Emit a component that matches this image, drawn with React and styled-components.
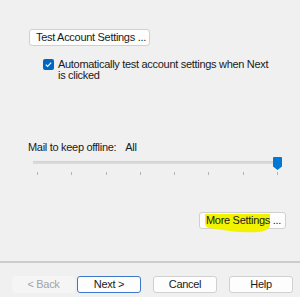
import React from "react";
import styled, { createGlobalStyle } from "styled-components";

const Global = createGlobalStyle`
  html, body { margin: 0; padding: 0; background: #f0f0f0; }
  body { font-family: "Liberation Sans", Arial, sans-serif; color: #1a1a1a; }
`;

const Window = styled.div`
  width: 300px;
  height: 297px;
  background: #f0f0f0;
  display: flex;
  flex-direction: column;
  overflow: hidden;
  font-size: 11px;
  letter-spacing: -0.3px;
`;

const Panel = styled.div`
  height: 261px;
  box-sizing: border-box;
  padding: 29px 14px 0 28px;
  display: flex;
  flex-direction: column;
  align-items: flex-start;
`;

const Button = styled.div`
  box-sizing: border-box;
  height: ${p => p.$h || 17}px;
  width: ${p => p.$w}px;
  margin-left: ${p => p.$ml || 0}px;
  margin-top: ${p => p.$mt || 0}px;
  display: flex;
  align-items: center;
  justify-content: ${p => (p.$left ? "flex-start" : "center")};
  padding-left: ${p => (p.$left ? 6 : 0)}px;
  background: ${p => (p.$disabled ? "#f5f5f5" : "#fdfdfd")};
  border: 1px solid ${p => (p.$default ? "#3c78c8" : p.$disabled ? "#f5f5f5" : "#d0d0d0")};
  border-radius: 3px;
  color: ${p => (p.$disabled ? "#a3a3a3" : "#1a1a1a")};
  font-size: 11px;
  line-height: 1;
  white-space: nowrap;
  align-self: ${p => (p.$end ? "flex-end" : "auto")};
`;

const CheckRow = styled.div`
  margin-top: 13px;
  margin-left: 15px;
  display: flex;
  align-items: flex-start;
  gap: 4px;
`;

const Box = styled.div`
  width: 11px;
  height: 11px;
  border-radius: 2px;
  background: #0067c0;
  display: flex;
  align-items: center;
  justify-content: center;
  flex: none;
`;

const CheckText = styled.div`
  white-space: nowrap;
  line-height: 11px;
  font-size: 11px;
`;

const Label = styled.div`
  margin-top: 60px;
  line-height: 12px;
  display: flex;
  gap: 9px;
`;

const Slider = styled.div`
  position: relative;
  margin-top: 4px;
  margin-left: 5px;
  width: 247px;
  height: 13px;
`;

const Track = styled.div`
  margin-top: 4px;
  height: 3px;
  background: #dadada;
  border-top: 1px solid #d2d2d2;
  box-sizing: border-box;
`;

const Thumb = styled.svg`
  position: absolute;
  left: 240px;
  top: 0;
`;

const Ticks = styled.div`
  margin-top: 2px;
  margin-left: 9px;
  width: 241px;
  height: 3px;
  display: flex;
  justify-content: space-between;
`;

const Tick = styled.div`
  width: 1px;
  height: 3px;
  background: #b4b4b4;
`;

const Highlight = styled.span`
  position: relative;
  z-index: 0;
`;

const Marker = styled.svg`
  position: absolute;
  left: -2px;
  top: -2px;
  z-index: -1;
`;

const Separator = styled.div`
  height: 2px;
  background: #cdcdcd;
`;

const Footer = styled.div`
  display: flex;
  padding: 13px 0 0 12px;
`;

export default function App() {
  return (
    <Window>
      <Global />
      <Panel>
        <Button $w={121} $ml={1} $left>Test Account Settings ...</Button>
        <CheckRow>
          <Box>
            <svg width="9" height="9" viewBox="0 0 9 9">
              <path d="M1.8 4.6 L3.6 6.4 L7.2 2.6" fill="none" stroke="#fff" strokeWidth="1.1" />
            </svg>
          </Box>
          <CheckText>
            Automatically test account settings when Next
            <br />
            is clicked
          </CheckText>
        </CheckRow>
        <Label>
          <span>Mail to keep offline:</span>
          <span>All</span>
        </Label>
        <Slider>
          <Track />
          <Thumb width="9" height="13" viewBox="0 0 9 13">
            <path d="M1 0 H8 Q9 0 9 1 V9.5 L4.5 13 L0 9.5 V1 Q0 0 1 0 Z" fill="#0078d4" />
          </Thumb>
        </Slider>
        <Ticks>
          {Array.from({ length: 8 }).map((_, i) => (
            <Tick key={i} />
          ))}
        </Ticks>
        <Button $w={87} $mt={37} $end $left>
          <Highlight>
            <Marker width="68" height="20" viewBox="0 0 68 20">
              <path
                d="M1 1 L66 1 L66 13 Q64 18 55 19 Q40 20 25 18 Q12 16 5 15 Q1 14 1 10 Z"
                fill="#f2f200"
              />
            </Marker>
            More Settings
          </Highlight>
          &nbsp;...
        </Button>
      </Panel>
      <Separator />
      <Footer>
        <Button $w={63} $h={17} $disabled>&lt; Back</Button>
        <Button $w={64} $h={17} $ml={2} $default>Next &gt;</Button>
        <Button $w={64} $h={17} $ml={12}>Cancel</Button>
        <Button $w={64} $h={17} $ml={12}>Help</Button>
      </Footer>
    </Window>
  );
}
